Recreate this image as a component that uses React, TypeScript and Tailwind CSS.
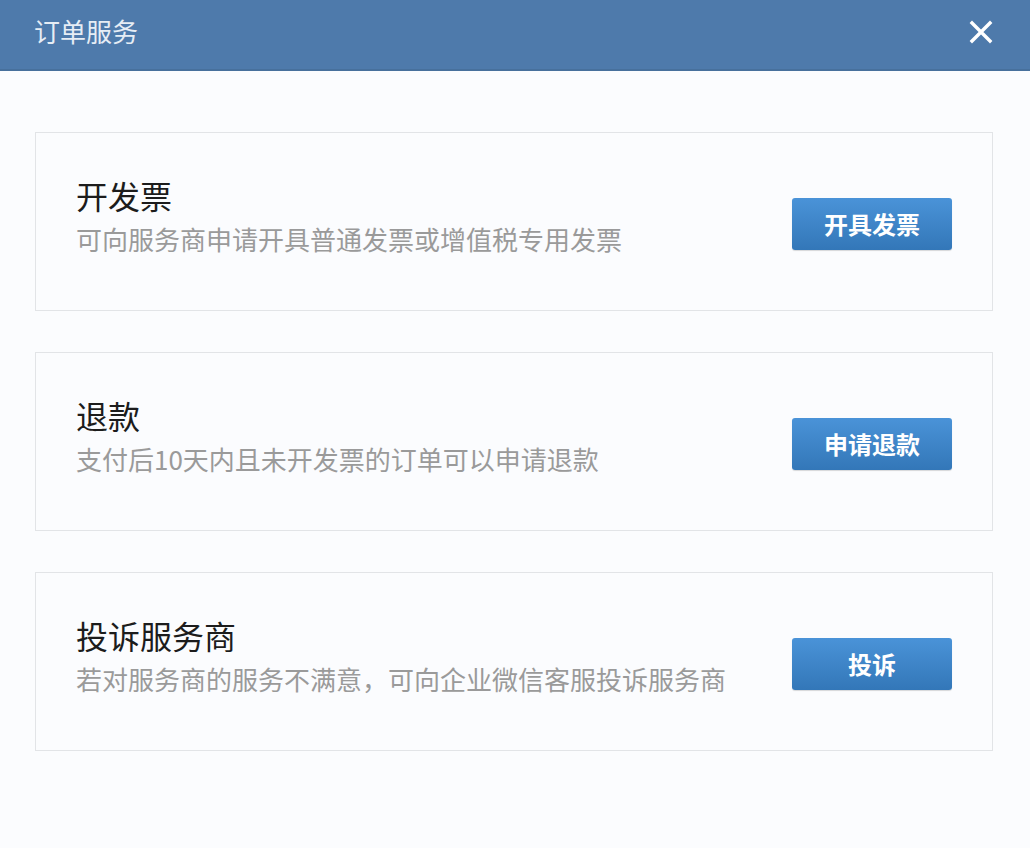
import React from "react";

const items = [
  { title: "开发票", desc: "可向服务商申请开具普通发票或增值税专用发票", action: "开具发票" },
  { title: "退款", desc: "支付后10天内且未开发票的订单可以申请退款", action: "申请退款" },
  { title: "投诉服务商", desc: "若对服务商的服务不满意，可向企业微信客服投诉服务商", action: "投诉" },
];

export default function App() {
  return (
    <div
      className="w-[1030px] h-[848px] bg-[#fbfcfe] flex flex-col"
      style={{ fontFamily: '"Noto Sans CJK SC", "Liberation Sans", sans-serif' }}
    >
      {/* 顶部标题栏 */}
      <div className="h-[71px] bg-[#4e7aab] border-b-2 border-[#47709c] flex items-center justify-between pl-[34px] pr-[36px]">
        <div className="text-[26px] leading-none text-[#e6edf5] -mt-[8px]">订单服务</div>
        <svg width="26" height="26" viewBox="0 0 26 26" className="-mt-[6px]">
          <path d="M4 4 L22 22 M22 4 L4 22" stroke="#ffffff" strokeWidth="3.4" strokeLinecap="square" />
        </svg>
      </div>

      {/* 服务卡片 */}
      <div className="flex flex-col gap-[41px] pt-[61px] pl-[35px] pr-[37px]">
        {items.map((item) => (
          <div
            key={item.title}
            className="h-[179px] border border-[#e2e4e7] bg-[#fbfcfe] flex items-center justify-between pl-[40px] pr-[40px]"
          >
            <div className="flex flex-col gap-[7px] -mt-[11px]">
              <div className="text-[32px] leading-[38px] text-[#1c1c1c]">{item.title}</div>
              <div className="text-[26px] leading-[36px] text-[#9a9a9a]">{item.desc}</div>
            </div>
            <button className="w-[160px] h-[52px] rounded-[3px] bg-gradient-to-b from-[#4a93d8] to-[#3377b8] text-white text-[24px] font-bold leading-none shadow-[0_1px_1px_rgba(0,0,0,0.15)] mt-[4px]">
              {item.action}
            </button>
          </div>
        ))}
      </div>
    </div>
  );
}
